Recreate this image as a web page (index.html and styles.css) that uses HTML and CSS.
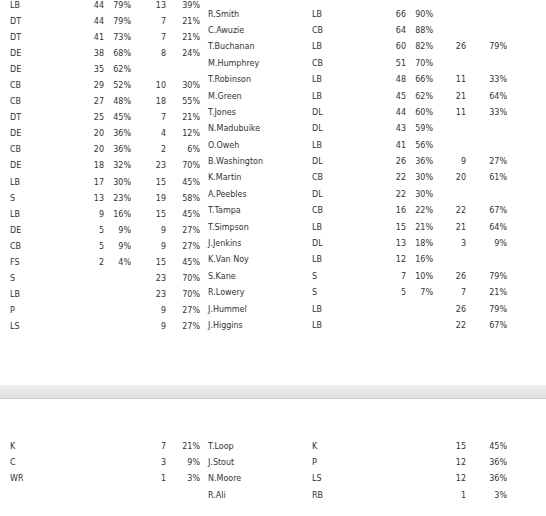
FILE: index.html
```html
<!DOCTYPE html>
<html>
<head>
<meta charset="utf-8">
<link rel="stylesheet" href="styles.css">
</head>
<body>
<div class="page">
  <section class="upper">
    <div class="tbl tbl-left">
      <div class="row"><span class="pos">LB</span><span class="num">44</span><span class="num">79%</span><span class="num">13</span><span class="num">39%</span></div>
      <div class="row"><span class="pos">DT</span><span class="num">44</span><span class="num">79%</span><span class="num">7</span><span class="num">21%</span></div>
      <div class="row"><span class="pos">DT</span><span class="num">41</span><span class="num">73%</span><span class="num">7</span><span class="num">21%</span></div>
      <div class="row"><span class="pos">DE</span><span class="num">38</span><span class="num">68%</span><span class="num">8</span><span class="num">24%</span></div>
      <div class="row"><span class="pos">DE</span><span class="num">35</span><span class="num">62%</span><span class="num"></span><span class="num"></span></div>
      <div class="row"><span class="pos">CB</span><span class="num">29</span><span class="num">52%</span><span class="num">10</span><span class="num">30%</span></div>
      <div class="row"><span class="pos">CB</span><span class="num">27</span><span class="num">48%</span><span class="num">18</span><span class="num">55%</span></div>
      <div class="row"><span class="pos">DT</span><span class="num">25</span><span class="num">45%</span><span class="num">7</span><span class="num">21%</span></div>
      <div class="row"><span class="pos">DE</span><span class="num">20</span><span class="num">36%</span><span class="num">4</span><span class="num">12%</span></div>
      <div class="row"><span class="pos">CB</span><span class="num">20</span><span class="num">36%</span><span class="num">2</span><span class="num">6%</span></div>
      <div class="row"><span class="pos">DE</span><span class="num">18</span><span class="num">32%</span><span class="num">23</span><span class="num">70%</span></div>
      <div class="row"><span class="pos">LB</span><span class="num">17</span><span class="num">30%</span><span class="num">15</span><span class="num">45%</span></div>
      <div class="row"><span class="pos">S</span><span class="num">13</span><span class="num">23%</span><span class="num">19</span><span class="num">58%</span></div>
      <div class="row"><span class="pos">LB</span><span class="num">9</span><span class="num">16%</span><span class="num">15</span><span class="num">45%</span></div>
      <div class="row"><span class="pos">DE</span><span class="num">5</span><span class="num">9%</span><span class="num">9</span><span class="num">27%</span></div>
      <div class="row"><span class="pos">CB</span><span class="num">5</span><span class="num">9%</span><span class="num">9</span><span class="num">27%</span></div>
      <div class="row"><span class="pos">FS</span><span class="num">2</span><span class="num">4%</span><span class="num">15</span><span class="num">45%</span></div>
      <div class="row"><span class="pos">S</span><span class="num"></span><span class="num"></span><span class="num">23</span><span class="num">70%</span></div>
      <div class="row"><span class="pos">LB</span><span class="num"></span><span class="num"></span><span class="num">23</span><span class="num">70%</span></div>
      <div class="row"><span class="pos">P</span><span class="num"></span><span class="num"></span><span class="num">9</span><span class="num">27%</span></div>
      <div class="row"><span class="pos">LS</span><span class="num"></span><span class="num"></span><span class="num">9</span><span class="num">27%</span></div>
    </div>
    <div class="tbl tbl-right">
      <div class="row"><span class="name">K.Hamilton</span><span class="pos">S</span><span class="num">71</span><span class="num">97%</span><span class="num">8</span><span class="num">24%</span></div>
      <div class="row"><span class="name">R.Smith</span><span class="pos">LB</span><span class="num">66</span><span class="num">90%</span><span class="num"></span><span class="num"></span></div>
      <div class="row"><span class="name">C.Awuzie</span><span class="pos">CB</span><span class="num">64</span><span class="num">88%</span><span class="num"></span><span class="num"></span></div>
      <div class="row"><span class="name">T.Buchanan</span><span class="pos">LB</span><span class="num">60</span><span class="num">82%</span><span class="num">26</span><span class="num">79%</span></div>
      <div class="row"><span class="name">M.Humphrey</span><span class="pos">CB</span><span class="num">51</span><span class="num">70%</span><span class="num"></span><span class="num"></span></div>
      <div class="row"><span class="name">T.Robinson</span><span class="pos">LB</span><span class="num">48</span><span class="num">66%</span><span class="num">11</span><span class="num">33%</span></div>
      <div class="row"><span class="name">M.Green</span><span class="pos">LB</span><span class="num">45</span><span class="num">62%</span><span class="num">21</span><span class="num">64%</span></div>
      <div class="row"><span class="name">T.Jones</span><span class="pos">DL</span><span class="num">44</span><span class="num">60%</span><span class="num">11</span><span class="num">33%</span></div>
      <div class="row"><span class="name">N.Madubuike</span><span class="pos">DL</span><span class="num">43</span><span class="num">59%</span><span class="num"></span><span class="num"></span></div>
      <div class="row"><span class="name">O.Oweh</span><span class="pos">LB</span><span class="num">41</span><span class="num">56%</span><span class="num"></span><span class="num"></span></div>
      <div class="row"><span class="name">B.Washington</span><span class="pos">DL</span><span class="num">26</span><span class="num">36%</span><span class="num">9</span><span class="num">27%</span></div>
      <div class="row"><span class="name">K.Martin</span><span class="pos">CB</span><span class="num">22</span><span class="num">30%</span><span class="num">20</span><span class="num">61%</span></div>
      <div class="row"><span class="name">A.Peebles</span><span class="pos">DL</span><span class="num">22</span><span class="num">30%</span><span class="num"></span><span class="num"></span></div>
      <div class="row"><span class="name">T.Tampa</span><span class="pos">CB</span><span class="num">16</span><span class="num">22%</span><span class="num">22</span><span class="num">67%</span></div>
      <div class="row"><span class="name">T.Simpson</span><span class="pos">LB</span><span class="num">15</span><span class="num">21%</span><span class="num">21</span><span class="num">64%</span></div>
      <div class="row"><span class="name">J.Jenkins</span><span class="pos">DL</span><span class="num">13</span><span class="num">18%</span><span class="num">3</span><span class="num">9%</span></div>
      <div class="row"><span class="name">K.Van Noy</span><span class="pos">LB</span><span class="num">12</span><span class="num">16%</span><span class="num"></span><span class="num"></span></div>
      <div class="row"><span class="name">S.Kane</span><span class="pos">S</span><span class="num">7</span><span class="num">10%</span><span class="num">26</span><span class="num">79%</span></div>
      <div class="row"><span class="name">R.Lowery</span><span class="pos">S</span><span class="num">5</span><span class="num">7%</span><span class="num">7</span><span class="num">21%</span></div>
      <div class="row"><span class="name">J.Hummel</span><span class="pos">LB</span><span class="num"></span><span class="num"></span><span class="num">26</span><span class="num">79%</span></div>
      <div class="row"><span class="name">J.Higgins</span><span class="pos">LB</span><span class="num"></span><span class="num"></span><span class="num">22</span><span class="num">67%</span></div>
    </div>
  </section>
  <div class="band"></div>
  <section class="lower">
    <div class="tbl tbl-left">
      <div class="row"><span class="pos">K</span><span class="num"></span><span class="num"></span><span class="num">7</span><span class="num">21%</span></div>
      <div class="row"><span class="pos">C</span><span class="num"></span><span class="num"></span><span class="num">3</span><span class="num">9%</span></div>
      <div class="row"><span class="pos">WR</span><span class="num"></span><span class="num"></span><span class="num">1</span><span class="num">3%</span></div>
    </div>
    <div class="tbl tbl-right">
      <div class="row"><span class="name">T.Loop</span><span class="pos">K</span><span class="num"></span><span class="num"></span><span class="num">15</span><span class="num">45%</span></div>
      <div class="row"><span class="name">J.Stout</span><span class="pos">P</span><span class="num"></span><span class="num"></span><span class="num">12</span><span class="num">36%</span></div>
      <div class="row"><span class="name">N.Moore</span><span class="pos">LS</span><span class="num"></span><span class="num"></span><span class="num">12</span><span class="num">36%</span></div>
      <div class="row"><span class="name">R.Ali</span><span class="pos">RB</span><span class="num"></span><span class="num"></span><span class="num">1</span><span class="num">3%</span></div>
    </div>
  </section>
</div>
</body>
</html>
```

FILE: styles.css
```css
html, body {
  margin: 0;
  padding: 0;
  background: #ffffff;
  overflow: hidden;
}
.page {
  width: 546px;
  height: 516px;
  font-family: "DejaVu Sans", Verdana, sans-serif;
  font-size: 8px;
  color: #333333;
}
.upper {
  display: flex;
  align-items: flex-start;
  height: 385px;
}
.lower {
  display: flex;
  align-items: flex-start;
  padding-top: 39px;
}
.tbl-left {
  width: 200px;
  padding-left: 10px;
  box-sizing: border-box;
}
.tbl-right {
  margin-left: 8px;
}
.upper .tbl-left {
  margin-top: -3px;
}
.upper .tbl-right {
  margin-top: -10.5px;
}
.row {
  display: grid;
  align-items: center;
  white-space: nowrap;
}
.upper .tbl-left .row { height: 16.1px; }
.upper .tbl-right .row { height: 16.4px; }
.lower .row { height: 16.3px; }
.tbl-left .row {
  grid-template-columns: 70px 24px 27px 35px 34px;
}
.tbl-right .row {
  grid-template-columns: 104px 70px 24px 27px 33px 41px;
}
.num {
  text-align: right;
}
.band {
  height: 12px;
  background: linear-gradient(#ececef, #e0e0e4);
  border-top: 1px solid #f0f0f2;
  border-bottom: 1px solid #cbcbcf;
}
```
